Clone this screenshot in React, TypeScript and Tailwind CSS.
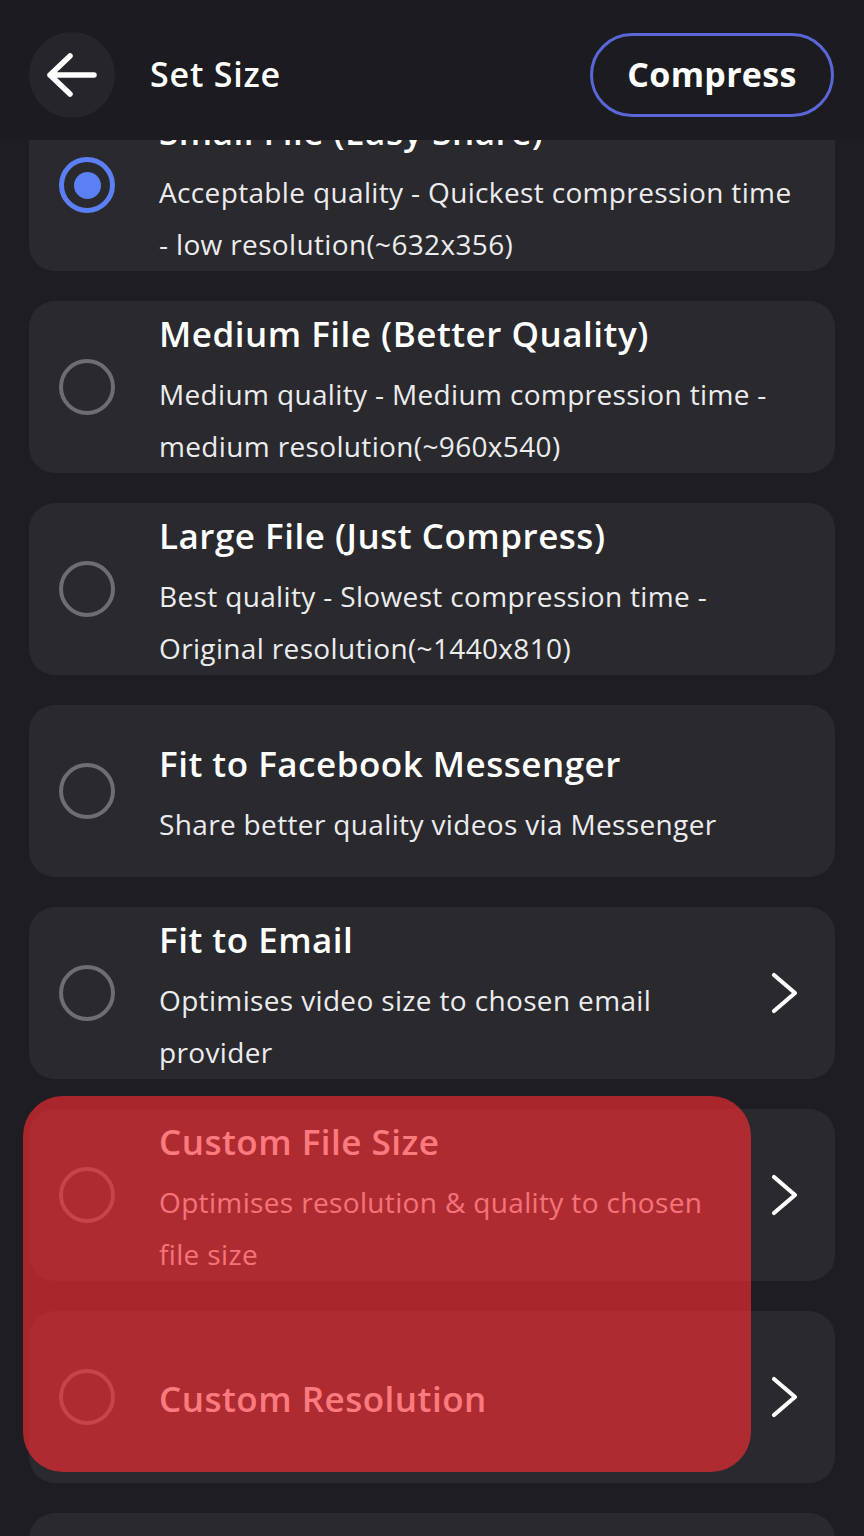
interface SizeOption {
  title: string;
  lines: string[];
  selected?: boolean;
  chevron?: boolean;
}

const options: SizeOption[] = [
  {
    title: 'Small File (Easy Share)',
    lines: ['Acceptable quality - Quickest compression time', '- low resolution(~632x356)'],
    selected: true,
  },
  {
    title: 'Medium File (Better Quality)',
    lines: ['Medium quality - Medium compression time -', 'medium resolution(~960x540)'],
  },
  {
    title: 'Large File (Just Compress)',
    lines: ['Best quality - Slowest compression time -', 'Original resolution(~1440x810)'],
  },
  {
    title: 'Fit to Facebook Messenger',
    lines: ['Share better quality videos via Messenger'],
  },
  {
    title: 'Fit to Email',
    lines: ['Optimises video size to chosen email', 'provider'],
    chevron: true,
  },
  {
    title: 'Custom File Size',
    lines: ['Optimises resolution & quality to chosen', 'file size'],
    chevron: true,
  },
  {
    title: 'Custom Resolution',
    lines: [],
    chevron: true,
  },
];

function Radio({ selected }: { selected?: boolean }) {
  if (selected) {
    return (
      <div className="w-[56px] h-[56px] shrink-0 rounded-full border-[5px] border-[#5b7ff5] flex items-center justify-center">
        <div className="w-[27px] h-[27px] rounded-full bg-[#5b7ff5]" />
      </div>
    );
  }
  return <div className="w-[56px] h-[56px] shrink-0 rounded-full border-[4px] border-[#6d6d72]" />;
}

function Chevron() {
  return (
    <svg width="34" height="48" viewBox="0 0 34 48" fill="none" className="shrink-0">
      <path
        d="M9 6 L30 24 L9 42"
        stroke="white"
        strokeWidth="4.2"
        strokeLinecap="round"
        strokeLinejoin="round"
      />
    </svg>
  );
}

export default function App() {
  return (
    <div
      className="w-[864px] h-[1536px] bg-[#1d1d22] overflow-hidden relative flex flex-col text-white"
      style={{ fontFamily: '"Open Sans", "Noto Sans", sans-serif' }}
    >
      {/* Header */}
      <div className="h-[140px] shrink-0 flex items-center pt-[9px] pl-[29px] pr-[30px] bg-[#1c1b20] relative z-10">
        <button className="w-[86px] h-[86px] rounded-full bg-[#26252b] flex items-center justify-center">
          <svg width="86" height="86" viewBox="0 0 86 86" fill="none">
            <path
              d="M21 43 H65 M41 24 L21 43 L41 62"
              stroke="white"
              strokeWidth="5.5"
              strokeLinecap="round"
              strokeLinejoin="round"
            />
          </svg>
        </button>
        <h1 className="ml-[35px] text-[34px] font-semibold tracking-[0.8px]">Set Size</h1>
        <button className="ml-auto w-[244px] h-[84px] rounded-full border-[3px] border-[#5b66d8] text-[34px] font-bold tracking-[0.3px] flex items-center justify-center">
          Compress
        </button>
      </div>

      {/* Options list */}
      <div className="flex-1 overflow-hidden px-[29px]">
        <div className="flex flex-col gap-[30px] -mt-[41px]">
          {options.map((opt) => (
            <div
              key={opt.title}
              className="h-[172px] shrink-0 rounded-[26px] bg-[#29292e] flex items-center pl-[30px] pr-[36px]"
            >
              <Radio selected={opt.selected} />
              <div className="ml-[44px] flex-1 flex flex-col pt-[4px]">
                <div className="text-[35px] font-semibold leading-[56px] tracking-[0.5px] whitespace-nowrap">
                  {opt.title}
                </div>
                {opt.lines.length > 0 && (
                  <div className="mt-[6px] text-[28px] leading-[52px] text-[#ececee] tracking-[0.35px]">
                    {opt.lines.map((l) => (
                      <div key={l} className="whitespace-nowrap">
                        {l}
                      </div>
                    ))}
                  </div>
                )}
              </div>
              {opt.chevron && <Chevron />}
            </div>
          ))}
          <div className="h-[172px] shrink-0 rounded-[26px] bg-[#29292e]" />
        </div>
      </div>

      {/* Red redaction overlay */}
      <div className="absolute left-[23px] top-[1096px] w-[728px] h-[376px] rounded-[40px] bg-[rgba(250,44,50,0.63)] z-20" />
    </div>
  );
}
